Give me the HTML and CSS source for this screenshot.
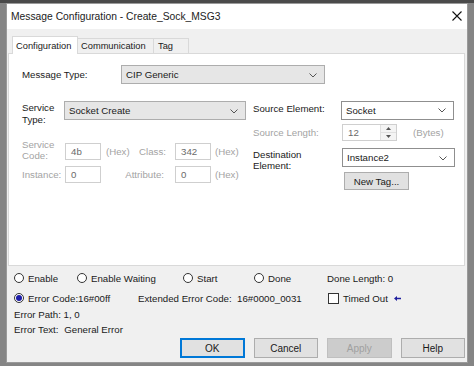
FILE: index.html
```html
<!DOCTYPE html>
<html lang="en">
<head>
  <meta charset="UTF-8">
  <title>Message Configuration - Create_Sock_MSG3</title>
  <link rel="stylesheet" href="styles.css">
</head>
<body>
  <div class="dlg">
    <div class="titleBar">
      <span class="titleText">Message Configuration - Create_Sock_MSG3</span>
      <svg class="closeX" width="10" height="10" viewBox="0 0 10 10">
        <path d="M0.5 0.5 L9.5 9.5 M9.5 0.5 L0.5 9.5" stroke="#111" stroke-width="1.1" fill="none"/>
      </svg>
    </div>

    <div class="dlgBody">
      <div class="tabs">
        <div class="tab sel">Configuration</div>
        <div class="tab tabComm">Communication</div>
        <div class="tab tabTag">Tag</div>
      </div>

      <div class="panel">
        <div class="rowMsg">
          <div class="lblMsg">Message Type:</div>
          <div class="combo grayCombo comboMsg">
            <span>CIP Generic</span>
            <svg class="chev" width="8" height="5" viewBox="0 0 8 5"><polyline points="0.5,0.5 4,4 7.5,0.5" stroke="#555" fill="none"/></svg>
          </div>
        </div>

        <div class="cols">
          <div class="colLeft">
            <div class="rowSvc">
              <div class="lbl2 lblSvc">Service<br>Type:</div>
              <div class="combo grayCombo comboSvc">
                <span>Socket Create</span>
                <svg class="chev" width="8" height="5" viewBox="0 0 8 5"><polyline points="0.5,0.5 4,4 7.5,0.5" stroke="#555" fill="none"/></svg>
              </div>
            </div>
            <div class="rowCode">
              <div class="lbl2 dis lblCode">Service<br>Code:</div>
              <div class="box">4b</div>
              <div class="dis hex1">(Hex)</div>
              <div class="dis lblClass">Class:</div>
              <div class="box">342</div>
              <div class="dis hex2">(Hex)</div>
            </div>
            <div class="rowInst">
              <div class="dis lblInst">Instance:</div>
              <div class="box">0</div>
              <div class="dis lblAttr">Attribute:</div>
              <div class="box">0</div>
              <div class="dis hex2">(Hex)</div>
            </div>
          </div>

          <div class="colRight">
            <div class="rowSrc">
              <div class="lblR">Source Element:</div>
              <div class="combo whiteCombo comboR">
                <span>Socket</span>
                <svg class="chev" width="8" height="5" viewBox="0 0 8 5"><polyline points="0.5,0.5 4,4 7.5,0.5" stroke="#555" fill="none"/></svg>
              </div>
            </div>
            <div class="rowLen">
              <div class="lblR dis">Source Length:</div>
              <div class="spin">
                <span class="spinVal">12</span>
                <div class="spinBtns">
                  <div class="spinUp"><svg width="5" height="3" viewBox="0 0 5 3"><polygon points="0,3 2.5,0 5,3" fill="#555"/></svg></div>
                  <div class="spinDn"><svg width="5" height="3" viewBox="0 0 5 3"><polygon points="0,0 2.5,3 5,0" fill="#555"/></svg></div>
                </div>
              </div>
              <div class="dis bytes">(Bytes)</div>
            </div>
            <div class="rowDst">
              <div class="lbl2 lblR lblDst">Destination<br>Element:</div>
              <div class="combo whiteCombo comboR">
                <span>Instance2</span>
                <svg class="chev" width="8" height="5" viewBox="0 0 8 5"><polyline points="0.5,0.5 4,4 7.5,0.5" stroke="#555" fill="none"/></svg>
              </div>
            </div>
            <div class="rowNew">
              <div class="btn btnNew">New Tag...</div>
            </div>
          </div>
        </div>
      </div>

      <div class="status1">
        <div class="rad rad1"><span class="dot"></span>Enable</div>
        <div class="rad rad2"><span class="dot"></span>Enable Waiting</div>
        <div class="rad rad3"><span class="dot"></span>Start</div>
        <div class="rad rad4"><span class="dot"></span>Done</div>
        <div class="doneLen">Done Length: 0</div>
      </div>

      <div class="status2">
        <div class="rad errCode"><span class="dot on"></span>Error Code:16#00ff</div>
        <div class="extCode">Extended Error Code: &nbsp;16#0000_0031</div>
        <div class="chk"><span class="chkBox"></span>Timed Out</div>
        <svg class="arrow" width="7" height="5" viewBox="0 0 7 5"><polygon points="0,2.5 3,0 3,1.7 7,1.7 7,3.3 3,3.3 3,5" fill="#1f1f9e"/></svg>
      </div>

      <div class="errLine">Error Path: 1, 0</div>
      <div class="errLine">Error Text: <span class="errTxt">General Error</span></div>

      <div class="btnRow">
        <div class="btn btnMain btnOk">OK</div>
        <div class="btn btnMain">Cancel</div>
        <div class="btn btnMain btnDis">Apply</div>
        <div class="btn btnMain">Help</div>
      </div>
    </div>
  </div>
</body>
</html>
```

FILE: styles.css
```css
html, body {
  margin: 0;
  padding: 0;
  overflow: hidden;
}
body {
  width: 474px;
  height: 366px;
  background: #858585;
  border-top: 3px solid #4a4a4a;
  box-sizing: border-box;
  font-family: "Liberation Sans", Arial, sans-serif;
  font-size: 9.7px;
  color: #1a1a1a;
}
.dlg {
  margin-left: 6px;
  width: 462px;
  height: 360px;
  box-sizing: border-box;
  border: 1px solid #9a9a9a;
  background: #f0f0f0;
}
.titleBar {
  height: 25px;
  background: #fff;
  display: flex;
  align-items: center;
  justify-content: space-between;
  padding: 0 5px 0 4px;
}
.titleText {
  font-size: 10.3px;
  color: #222;
}
.closeX {
  margin-bottom: 1px;
}
.dlgBody {
  padding: 0 2px 0 1px;
}
.tabs {
  display: flex;
  align-items: flex-end;
  height: 24px;
  padding-left: 4px;
}
.tab {
  height: 15px;
  box-sizing: border-box;
  border: 1px solid #d9d9d9;
  border-bottom: none;
  display: flex;
  align-items: center;
  font-size: 9.3px;
  background: #f0f0f0;
  padding-left: 3px;
}
.tab.sel {
  width: 66px;
  height: 18px;
  background: #fff;
  margin-bottom: -1px;
  position: relative;
  z-index: 1;
  padding-left: 3px;
}
.tabComm {
  width: 76px;
  border-left: none;
}
.tabTag {
  width: 35px;
  border-left: none;
  padding-left: 4px;
}
.panel {
  height: 213px;
  box-sizing: border-box;
  border: 1px solid #d9d9d9;
  background: #fff;
  padding: 11px 0 0 13px;
}
.rowMsg {
  display: flex;
  align-items: center;
  height: 19px;
}
.lblMsg {
  width: 99px;
}
.combo {
  box-sizing: border-box;
  height: 19px;
  display: flex;
  align-items: center;
  justify-content: space-between;
  padding: 0 7px 0 4px;
}
.grayCombo {
  background: #e6e6e6;
  border: 1px solid #adadad;
}
.whiteCombo {
  background: #fff;
  border: 1px solid #8f8f8f;
}
.comboMsg {
  width: 204px;
}
.chev {
  margin-top: 1px;
}
.cols {
  display: flex;
  margin-top: 17px;
}
.colLeft {
  width: 231px;
}
.lbl2 {
  line-height: 11px;
}
.dis {
  color: #a3a3a3;
}
.rowSvc {
  display: flex;
  height: 19px;
}
.lblSvc {
  width: 42px;
  line-height: 12px;
  padding-top: 1px;
}
.comboSvc {
  width: 182px;
}
.rowCode {
  display: flex;
  align-items: center;
  margin-top: 22px;
  height: 18px;
}
.lblCode {
  width: 43px;
  margin-top: -2px;
}
.box {
  width: 36px;
  height: 17px;
  box-sizing: border-box;
  border: 1px solid #cfcfcf;
  background: #fff;
  color: #6a6a6a;
  display: flex;
  align-items: center;
  padding-left: 5px;
}
.hex1 {
  width: 38px;
  padding-left: 5px;
  box-sizing: border-box;
}
.lblClass {
  width: 36px;
}
.hex2 {
  padding-left: 4px;
}
.rowInst {
  display: flex;
  align-items: center;
  margin-top: 6px;
  height: 17px;
}
.lblInst {
  width: 43px;
}
.lblAttr {
  width: 74px;
  text-align: right;
  padding-right: 11px;
  box-sizing: border-box;
}
.colRight {
  flex: 1;
}
.rowSrc {
  display: flex;
  align-items: center;
  height: 18px;
}
.lblR {
  width: 88px;
  margin-top: -3px;
}
.comboR {
  width: 113px;
  height: 19px;
}
.rowLen {
  display: flex;
  align-items: center;
  margin-top: 5px;
  height: 17px;
}
.rowLen .lblR {
  width: 89px;
  margin-top: 0;
}
.spin {
  width: 55px;
  height: 17px;
  box-sizing: border-box;
  border: 1px solid #cfcfcf;
  display: flex;
  justify-content: space-between;
}
.spinVal {
  color: #6a6a6a;
  padding: 2px 0 0 5px;
}
.spinBtns {
  width: 15px;
  display: flex;
  flex-direction: column;
  border-left: 1px solid #e0e0e0;
}
.spinUp, .spinDn {
  flex: 1;
  display: flex;
  align-items: center;
  justify-content: center;
  background: #f4f4f4;
}
.spinUp {
  border-bottom: 1px solid #e0e0e0;
}
.bytes {
  margin-left: 16px;
}
.rowDst {
  display: flex;
  align-items: flex-start;
  margin-top: 7px;
  height: 19px;
}
.lblDst {
  width: 89px;
  margin-top: 1px;
}
.rowNew {
  margin-top: 5px;
  padding-left: 91px;
}
.btn {
  box-sizing: border-box;
  background: #e1e1e1;
  border: 1px solid #adadad;
  display: flex;
  align-items: center;
  justify-content: center;
}
.btnNew {
  width: 65px;
  height: 18px;
}
.status1, .status2 {
  display: flex;
  align-items: center;
  height: 12px;
  padding-left: 6px;
}
.status1 {
  margin-top: 6px;
}
.status2 {
  margin-top: 8px;
}
.rad {
  display: flex;
  align-items: center;
}
.dot {
  width: 10px;
  height: 10px;
  box-sizing: border-box;
  border: 1px solid #333;
  border-radius: 50%;
  background: #fff;
  margin-right: 4px;
  display: flex;
  align-items: center;
  justify-content: center;
}
.dot.on::after {
  content: "";
  width: 6px;
  height: 6px;
  border-radius: 50%;
  background: #1c1ca8;
}
.rad1 { width: 63px; }
.rad2 { width: 106px; }
.rad3 { width: 71px; }
.rad4 { width: 73px; }
.errCode {
  width: 124px;
}
.extCode {
  width: 190px;
}
.chk {
  display: flex;
  align-items: center;
}
.chkBox {
  width: 11px;
  height: 11px;
  box-sizing: border-box;
  border: 1px solid #333;
  background: #fff;
  margin-right: 4px;
}
.arrow {
  margin-left: 6px;
}
.errLine {
  padding-left: 6px;
  height: 12px;
  line-height: 12px;
  margin-top: 3px;
}
.status2 + .errLine {
  margin-top: 5px;
}
.errTxt {
  margin-left: 3px;
}
.btnRow {
  display: flex;
  gap: 9px;
  padding-left: 172px;
  margin-top: 2px;
}
.btnMain {
  width: 65px;
  height: 20px;
  font-size: 10px;
}
.btnOk {
  border-color: #0078d7;
  box-shadow: inset 0 0 0 1px #0078d7;
}
.btnDis {
  background: #cccccc;
  border-color: #bfbfbf;
  color: #a0a0a0;
}
```
